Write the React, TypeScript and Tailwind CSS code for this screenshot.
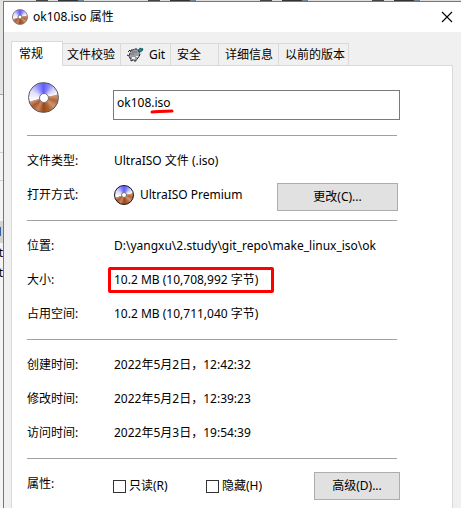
import type { ReactNode } from "react";

const DISC =
  "relative block shrink-0 rounded-full border bg-[conic-gradient(#605cf8_0deg,#8784ff_25deg,#cfceff_50deg,#f7f6fb_76deg,#cf9974_80deg,#b0663c_105deg,#cf9570_130deg,#b0602f_155deg,#99491c_180deg,#c98660_205deg,#a9592e_230deg,#cf9974_252deg,#ffffff_256deg,#dddcff_300deg,#8f8cff_335deg,#605cf8_360deg)]";

function Disc({ size, hole }: { size: string; hole: string }) {
  return (
    <span className={`${DISC} ${size}`} aria-hidden="true">
      <span
        className={`absolute top-1/2 left-1/2 -translate-x-1/2 -translate-y-1/2 rounded-full border border-[#77716f] bg-white ${hole}`}
      />
    </span>
  );
}

function TurtleIcon() {
  return (
    <svg width="17" height="15" viewBox="0 0 17 15" className="shrink-0" aria-hidden="true">
      <path d="M1 5 3 3M0 8l2 1" stroke="#171a1c" fill="none" />
      <path d="M4 3h2l1-1h3l2 2 1 3-1 3-2 2-1 2H7l-1-1-2 1-1-3-1-2 1-3Z" fill="#9b9ea2" stroke="#1d2023" strokeDasharray="3 1" />
      <path d="M5 5h5M4 7h3" stroke="#6f7276" />
      <path d="M5 10h3v2H5zM9 9h2v1H9z" fill="#efefef" />
      <path d="M11 4 12 2l2-1v1l2 0-1 2-2 1Z" fill="#2c8c98" stroke="#123a52" strokeWidth="0.8" />
      <path d="M15 1h1v1h-1z" fill="#1a8a66" />
    </svg>
  );
}

const TABS = [
  { label: "文件校验", box: "w-[58px] pl-1" },
  { label: "Git", box: "w-[50px] pl-1.5", icon: true },
  { label: "安全", box: "w-12 pl-1.5" },
  { label: "详细信息", box: "w-[60px] pl-1.5" },
  { label: "以前的版本", box: "w-[70px] pl-1.5" },
];

function Row({ label, children }: { label: string; children: ReactNode }) {
  return (
    <div className="flex h-[34px] items-center">
      <dt className="w-[87px] shrink-0">{label}</dt>
      <dd className="flex min-w-0 flex-1 items-center whitespace-nowrap">{children}</dd>
    </div>
  );
}

function Rule() {
  return <hr className="mr-[3px] border-t border-[#a0a0a0]" />;
}

const BUTTON = "flex h-7 items-center justify-center border border-[#adadad] bg-[#e1e1e1]";

export default function App() {
  return (
    <div className="flex min-h-screen flex-col overflow-hidden bg-white font-['Noto_Sans','Noto_Sans_CJK_SC',sans-serif] text-[12px] leading-4 text-black">
      <div
        className="h-px bg-[repeating-linear-gradient(90deg,#dedede_0_36px,#444_36px_48px,#dedede_48px_58px,#333_58px_78px,#6d8296_78px_84px,#dedede_84px_112px)]"
        aria-hidden="true"
      />
      <div className="flex flex-1">
        <div className="flex w-[3px] shrink-0 flex-col overflow-hidden bg-[#f4f4f4]" aria-hidden="true">
          <div className="h-[94px] border-b border-[#a5a5a5] bg-[#e4e4e4]" />
          <div className="h-[58px] border-b border-[#cfcfcf]" />
          <div className="h-7 border-b border-[#cfcfcf]" />
          <div className="h-10" />
          <div className="flex h-[22px] items-center justify-end bg-[#d3d3d3]">1</div>
          <div className="flex h-5 items-center justify-end">t</div>
          <div className="flex h-5 items-center justify-end">t</div>
        </div>

        <main className="flex min-w-0 flex-1 flex-col border-t border-l border-[#7c7765] bg-[#f0f0f0]">
          <header className="flex h-[30px] shrink-0 items-center bg-white pr-2 pl-2">
            <Disc size="size-4 border-[#8a7c80]" hole="size-[5px]" />
            <h1 className="ml-[5px] flex-1">ok108.iso 属性</h1>
            <button type="button" aria-label="关闭" className="flex size-3 items-center justify-center">
              <svg width="12" height="12" viewBox="0 0 12 12" aria-hidden="true">
                <path d="m1 1 10 10M11 1 1 11" stroke="#000" strokeWidth="1.1" fill="none" />
              </svg>
            </button>
          </header>

          <div className="flex flex-1 flex-col pt-[9px] pr-2 pl-[7px]">
            <div role="tablist" className="flex h-6 shrink-0 items-end whitespace-nowrap">
              <button
                type="button"
                role="tab"
                aria-selected="true"
                className="relative -mb-px flex h-[25px] w-[52px] items-center border border-b-0 border-[#d9d9d9] bg-white pl-[7px]"
              >
                常规
              </button>
              {TABS.map((t) => (
                <button
                  key={t.label}
                  type="button"
                  role="tab"
                  aria-selected="false"
                  className={`flex h-[22px] items-center gap-[5px] border-t border-r border-[#d9d9d9] ${t.box}`}
                >
                  {t.icon && <TurtleIcon />}
                  {t.label}
                </button>
              ))}
            </div>

            <form className="flex-1 border border-b-0 border-[#d9d9d9] bg-white pr-[52px] pl-[15px]">
              <div className="flex h-[69px] items-start pt-4">
                <div className="w-[86px] shrink-0 pl-px">
                  <Disc size="size-[31px] border-[#595959]" hole="size-[10px]" />
                </div>
                <div className="relative mt-2 flex-1">
                  <input
                    type="text"
                    aria-label="文件名"
                    defaultValue="ok108.iso"
                    className="block h-[30px] w-full border border-[#7a7a7a] bg-white pb-1.5 pl-[3px] outline-none"
                  />
                  <svg
                    className="absolute top-[18px] left-[37px]"
                    width="25"
                    height="6"
                    viewBox="0 0 25 6"
                    aria-hidden="true"
                  >
                    <path d="M2 4c5 0 11-1 20-1" stroke="#f00" strokeWidth="3" strokeLinecap="round" fill="none" />
                  </svg>
                </div>
              </div>
              <Rule />

              <dl className="py-2">
                <Row label="文件类型:">UltraISO 文件 (.iso)</Row>
                <Row label="打开方式:">
                  <Disc size="size-5 border-[#111]" hole="size-[6px]" />
                  <span className="ml-1.5 flex-1">UltraISO Premium</span>
                  <button type="button" className={`${BUTTON} mt-1 mr-[2px] w-[121px]`}>
                    更改(C)...
                  </button>
                </Row>
              </dl>
              <Rule />

              <dl className="py-2">
                <Row label="位置:">D:\yangxu\2.study\git_repo\make_linux_iso\ok</Row>
                <Row label="大小:">
                  <span className="relative">
                    10.2 MB (10,708,992 字节)
                    <span className="absolute -top-[5px] -right-4 -bottom-[5px] -left-1.5 rounded-[2px] border-3 border-[#f00]" />
                  </span>
                </Row>
                <Row label="占用空间:">10.2 MB (10,711,040 字节)</Row>
              </dl>
              <Rule />

              <dl className="py-2">
                <Row label="创建时间:">2022年5月2日，12:42:32</Row>
                <Row label="修改时间:">2022年5月2日，12:39:23</Row>
                <Row label="访问时间:">2022年5月3日，19:54:39</Row>
              </dl>
              <Rule />

              <div className="flex items-center pt-[13px] pb-2 whitespace-nowrap">
                <span className="w-[86px] shrink-0 pb-1">属性:</span>
                <label className="flex w-[93px] items-center gap-[3px]">
                  <input
                    type="checkbox"
                    className="size-[13px] shrink-0 appearance-none border border-[#333] bg-white checked:bg-[#333]"
                  />
                  只读(R)
                </label>
                <label className="flex flex-1 items-center gap-[3px]">
                  <input
                    type="checkbox"
                    className="size-[13px] shrink-0 appearance-none border border-[#333] bg-white checked:bg-[#333]"
                  />
                  隐藏(H)
                </label>
                <button type="button" className={`${BUTTON} w-[86px]`}>
                  高级(D)...
                </button>
              </div>
            </form>
          </div>
        </main>
      </div>
    </div>
  );
}
